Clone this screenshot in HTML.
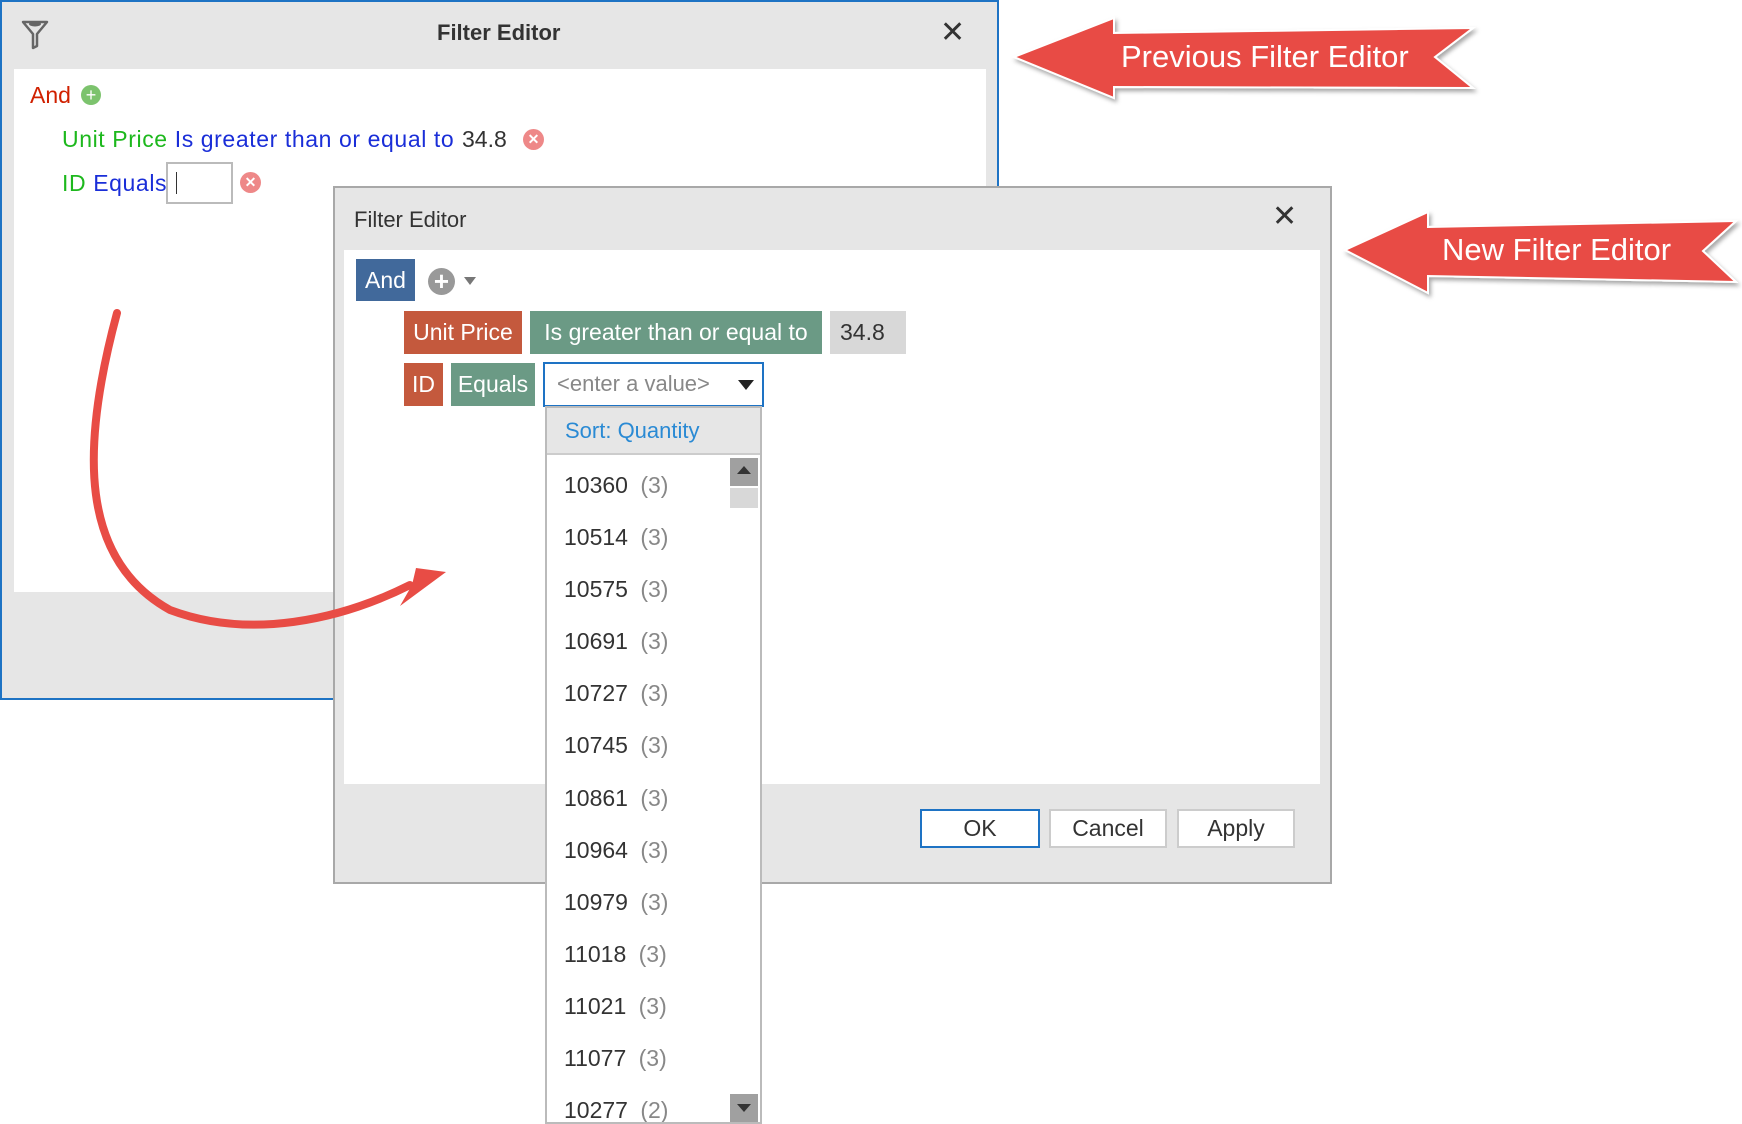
<!DOCTYPE html>
<html><head><meta charset="utf-8"><style>
*{margin:0;padding:0;box-sizing:border-box}
body{width:1742px;height:1124px;background:#fff;position:relative;overflow:hidden;font-family:"Liberation Sans",sans-serif;}
.a{position:absolute}
.t{position:absolute;white-space:nowrap;font-size:22px;line-height:1}
</style></head><body>
<!-- old window -->
<div class="a" style="left:0;top:0;width:999px;height:700px;border:2px solid #1e73c4;background:#e6e6e6"></div>
<div class="a" style="left:14px;top:69px;width:972px;height:523px;background:#fff"></div>
<svg class="a" style="left:20px;top:18px" width="30" height="32" viewBox="0 0 30 32"><path d="M3 4 H27 L17 16 V28 L13 30 V16 Z" fill="none" stroke="#666" stroke-width="2.5" stroke-linejoin="round"/><ellipse cx="15" cy="6" rx="6" ry="2.5" fill="#666"/></svg>
<div class="t" style="left:437px;top:22px;font-weight:bold;color:#333">Filter Editor</div>
<div class="t" style="left:940px;top:18px;font-size:30px;color:#333">✕</div>
<div class="t" style="left:30px;top:84px;color:#d02000;font-size:23px">And</div>
<div class="a" style="left:81px;top:85px;width:20px;height:20px;border-radius:50%;background:#7cc36d;color:#fff;font-size:18px;line-height:20px;text-align:center">+</div>
<div class="t" style="left:62px;top:128px;font-size:23px;letter-spacing:0.6px"><span style="color:#1db81d">Unit Price</span> <span style="color:#1a2ed8">Is greater than or equal to</span></div>
<div class="t" style="left:462px;top:128px;font-size:23px;color:#333">34.8</div>
<div class="a" style="left:523px;top:129px;width:21px;height:21px;border-radius:50%;background:#e88;color:#fff;font-size:14px;line-height:21px;text-align:center;font-weight:bold">✕</div>
<div class="t" style="left:62px;top:172px;font-size:23px;letter-spacing:0.6px"><span style="color:#1db81d">ID</span> <span style="color:#1a2ed8">Equals</span></div>
<div class="a" style="left:166px;top:162px;width:67px;height:42px;border:2px solid #bbb;background:#fff"><div style="position:absolute;left:8px;top:8px;width:1px;height:22px;background:#333"></div></div>
<div class="a" style="left:240px;top:172px;width:21px;height:21px;border-radius:50%;background:#e88;color:#fff;font-size:14px;line-height:21px;text-align:center;font-weight:bold">✕</div>

<!-- new window -->
<div class="a" style="left:333px;top:186px;width:999px;height:698px;border:2px solid #a8a8a8;background:#e6e6e6"></div>
<div class="a" style="left:344px;top:250px;width:976px;height:534px;background:#fff"></div>
<div class="t" style="left:354px;top:209px;color:#333">Filter Editor</div>
<div class="t" style="left:1272px;top:202px;font-size:30px;color:#333">✕</div>
<div class="a" style="left:356px;top:259px;width:59px;height:42px;background:#41699b;color:#fff;font-size:23px;line-height:42px;text-align:center">And</div>
<div class="a" style="left:428px;top:268px;width:27px;height:27px;border-radius:50%;background:#999;color:#fff;font-size:26px;line-height:26px;text-align:center;font-weight:bold">+</div>
<div class="a" style="left:464px;top:277px;border:6px solid transparent;border-top:8px solid #777"></div>
<div class="a" style="left:404px;top:311px;width:118px;height:43px;background:#c4593d;color:#fff;font-size:23px;line-height:43px;text-align:center">Unit Price</div>
<div class="a" style="left:530px;top:311px;width:292px;height:43px;background:#6b9a85;color:#fff;font-size:23px;line-height:43px;text-align:center">Is greater than or equal to</div>
<div class="a" style="left:830px;top:311px;width:76px;height:43px;background:#d8d8d8;color:#333;font-size:23px;line-height:43px;padding-left:10px">34.8</div>
<div class="a" style="left:404px;top:363px;width:39px;height:43px;background:#c4593d;color:#fff;font-size:23px;line-height:43px;text-align:center">ID</div>
<div class="a" style="left:451px;top:363px;width:84px;height:43px;background:#6b9a85;color:#fff;font-size:23px;line-height:43px;text-align:center">Equals</div>
<div class="a" style="left:543px;top:362px;width:221px;height:45px;border:2px solid #1e73c4;background:#fff;color:#888;font-size:22px;line-height:40px;padding-left:12px">&lt;enter a value&gt;</div>
<div class="a" style="left:738px;top:380px;border:8px solid transparent;border-top:10px solid #222"></div>
<!-- buttons -->
<div class="a" style="left:920px;top:809px;width:120px;height:39px;border:2px solid #1e73c4;background:#fff;font-size:23px;line-height:35px;text-align:center;color:#333">OK</div>
<div class="a" style="left:1049px;top:809px;width:118px;height:39px;border:2px solid #ccc;background:#fff;font-size:23px;line-height:35px;text-align:center;color:#333">Cancel</div>
<div class="a" style="left:1177px;top:809px;width:118px;height:39px;border:2px solid #ccc;background:#fff;font-size:23px;line-height:35px;text-align:center;color:#333">Apply</div>
<!-- dropdown -->
<div class="a" style="left:545px;top:406px;width:217px;height:718px;border:2px solid #bbb;background:#fff;overflow:hidden">
<div style="position:absolute;left:17px;top:51px;font-size:23px;color:#333;line-height:52.1px;white-space:nowrap">
<div>10360 <span style="color:#888;margin-left:6px">(3)</span></div>
<div>10514 <span style="color:#888;margin-left:6px">(3)</span></div>
<div>10575 <span style="color:#888;margin-left:6px">(3)</span></div>
<div>10691 <span style="color:#888;margin-left:6px">(3)</span></div>
<div>10727 <span style="color:#888;margin-left:6px">(3)</span></div>
<div>10745 <span style="color:#888;margin-left:6px">(3)</span></div>
<div>10861 <span style="color:#888;margin-left:6px">(3)</span></div>
<div>10964 <span style="color:#888;margin-left:6px">(3)</span></div>
<div>10979 <span style="color:#888;margin-left:6px">(3)</span></div>
<div>11018 <span style="color:#888;margin-left:6px">(3)</span></div>
<div>11021 <span style="color:#888;margin-left:6px">(3)</span></div>
<div>11077 <span style="color:#888;margin-left:6px">(3)</span></div>
<div>10277 <span style="color:#888;margin-left:6px">(2)</span></div>
</div>
</div>
<div class="a" style="left:547px;top:408px;width:213px;height:47px;background:#e6e6e6;border-bottom:2px solid #ccc;color:#2a8ad4;font-size:22px;line-height:46px;padding-left:18px">Sort: Quantity</div>
<div class="a" style="left:730px;top:458px;width:28px;height:28px;background:#a0a0a0"><div style="position:absolute;left:7px;top:8px;border:7px solid transparent;border-bottom:8px solid #333;border-top:0"></div></div>
<div class="a" style="left:730px;top:488px;width:28px;height:20px;background:#d8d8d8"></div>
<div class="a" style="left:730px;top:1094px;width:28px;height:28px;background:#a0a0a0"><div style="position:absolute;left:7px;top:10px;border:7px solid transparent;border-top:8px solid #333;border-bottom:0"></div></div>

<!-- arrows -->
<svg class="a" style="left:0;top:0" width="1742" height="1124">
<defs><filter id="s"><feDropShadow dx="2" dy="3" stdDeviation="2" flood-opacity="0.35"/></filter></defs>
<polygon points="1014,57 1114,18 1114,33 1473,28 1435,57 1473,88 1114,87 1114,98" fill="#e84c45" stroke="#fff" stroke-width="2" filter="url(#s)"/>
<polygon points="1345,250 1428,212 1428,227 1736,221 1703,251 1736,282 1428,276 1428,293" fill="#e84c45" stroke="#fff" stroke-width="2" filter="url(#s)"/>
<path d="M117,313 C80,450 80,560 170,610 C250,640 340,620 410,585" fill="none" stroke="#e84c45" stroke-width="8" stroke-linecap="round"/>
<polygon points="446,572 400,606 412,585 416,568" fill="#e84c45"/>
</svg>
<div class="t" style="left:1121px;top:41px;color:#fff;font-size:31px">Previous Filter Editor</div>
<div class="t" style="left:1442px;top:234px;color:#fff;font-size:31px">New Filter Editor</div>
</body></html>
